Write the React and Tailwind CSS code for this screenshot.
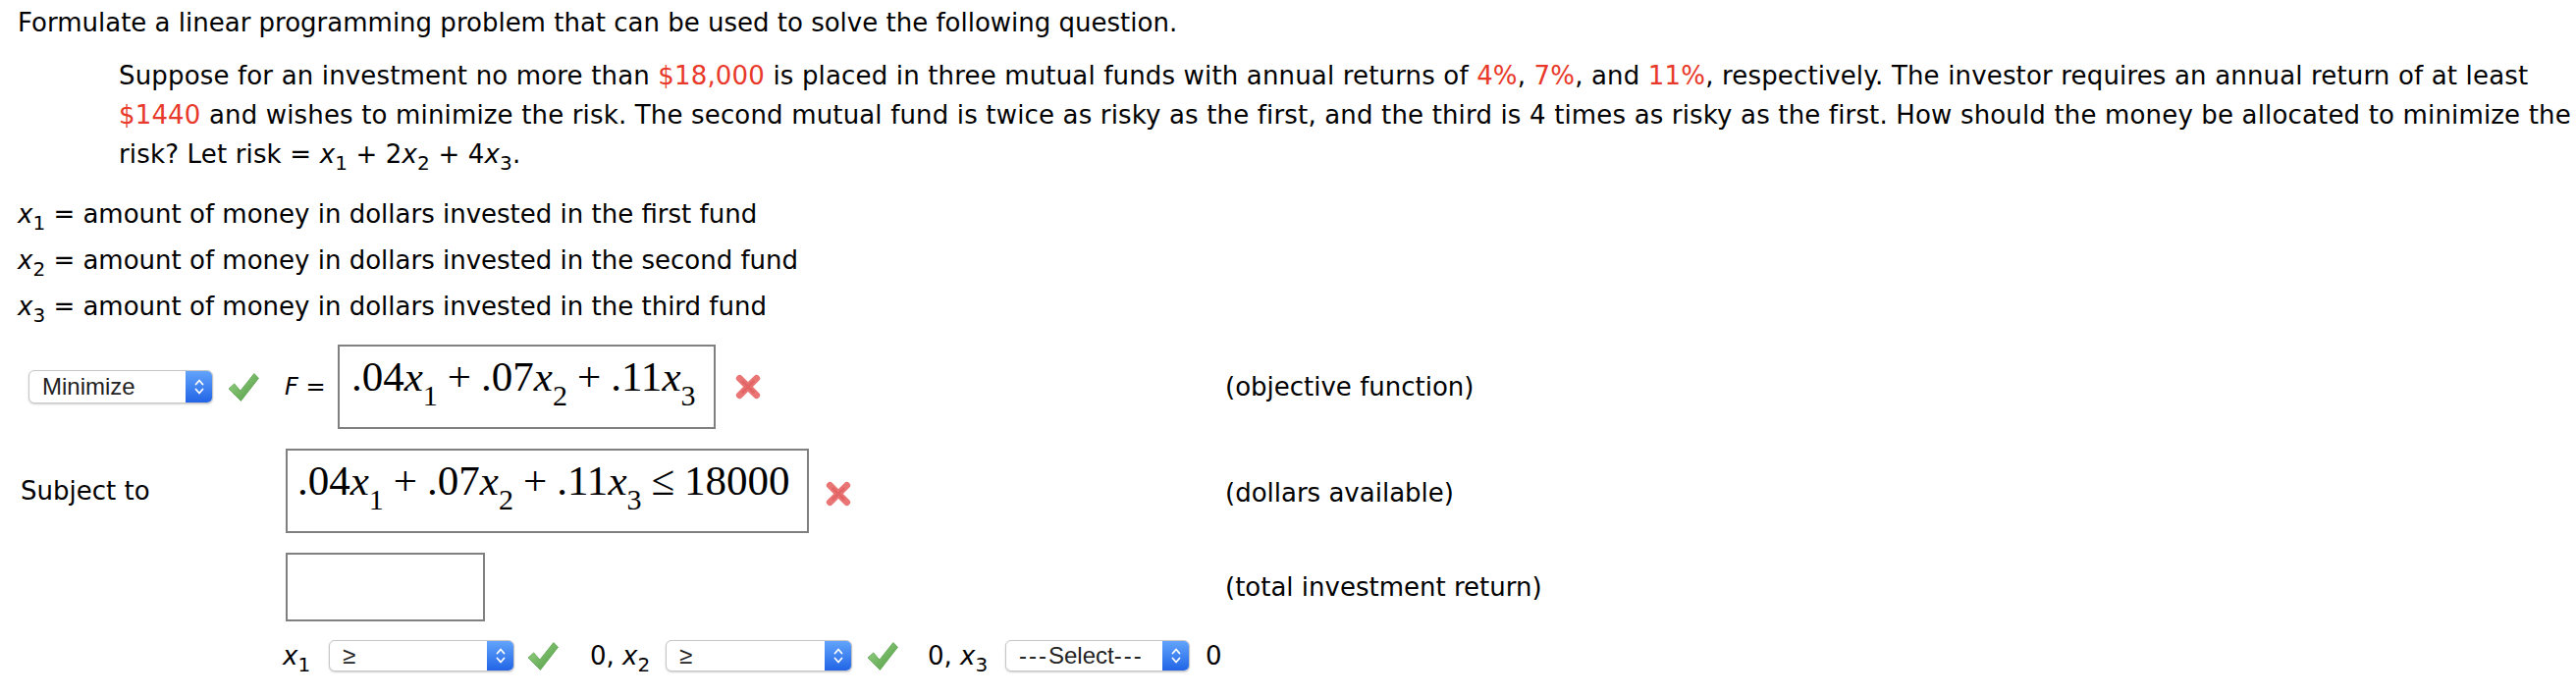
import React from 'react';

const sans = "font-['DejaVu_Sans','Verdana',sans-serif]";
const ui = "font-['Liberation_Sans','Helvetica',sans-serif]";
const serif = "font-['Liberation_Serif','Times_New_Roman',serif]";

// x with subscript, in running text
function V({ n }) {
  return (
    <>
      <span className="italic">x</span>
      <span className="relative top-[7px] text-[20px] leading-none">{n}</span>
    </>
  );
}

// x with subscript, in the math boxes
function MX({ c, n }) {
  return (
    <>
      {c}
      <span className="italic">x</span>
      <span className="relative top-[15px] text-[30px] leading-none">{n}</span>
    </>
  );
}

function Op({ children }) {
  return <span className="mx-[10px]">{children}</span>;
}

function Check() {
  return (
    <svg width="34" height="31" viewBox="0 0 32 30" className="shrink-0">
      <defs>
        <linearGradient id="ck" x1="0" y1="0" x2="1" y2="1">
          <stop offset="0" stopColor="#9ad486" />
          <stop offset="1" stopColor="#4f9a44" />
        </linearGradient>
      </defs>
      <path d="M1.5 16.5 L7 11.5 L13 18.5 L26.5 1.5 L31 6 L13.5 28.5 Z" fill="url(#ck)" stroke="#5fa552" strokeWidth="0.8" strokeLinejoin="round" />
    </svg>
  );
}

function Cross() {
  return (
    <svg width="28" height="28" viewBox="0 0 26 26" className="shrink-0">
      <g stroke="#e97575" strokeWidth="6.5" strokeLinecap="round">
        <line x1="5" y1="5" x2="21" y2="21" />
        <line x1="21" y1="5" x2="5" y2="21" />
      </g>
      <g stroke="#dc5454" strokeWidth="2.5" strokeLinecap="round" opacity="0.5">
        <line x1="8" y1="8" x2="18" y2="18" />
        <line x1="18" y1="8" x2="8" y2="18" />
      </g>
    </svg>
  );
}

function Select({ children, w, h }) {
  return (
    <div className={`flex shrink-0 items-stretch rounded-[6px] border border-[#c6c6c6] bg-white shadow-[0_1px_2px_rgba(0,0,0,0.18)] ${w} ${h}`}>
      <div className={`flex flex-1 items-center pl-[13px] text-[24px] text-[#222] ${ui}`}>{children}</div>
      <div className="flex w-[27px] items-center justify-center rounded-r-[5px] bg-linear-to-b from-[#62a3fb] to-[#2264e6]">
        <svg width="12" height="22" viewBox="0 0 12 22">
          <g fill="none" stroke="#fff" strokeWidth="1.8" strokeLinecap="round" strokeLinejoin="round">
            <path d="M2.5 8.5 L6 4.5 L9.5 8.5" />
            <path d="M2.5 13.5 L6 17.5 L9.5 13.5" />
          </g>
        </svg>
      </div>
    </div>
  );
}

export default function App() {
  return (
    <div className={`h-[710px] w-[2624px] overflow-hidden bg-white pl-[18px] pt-[8px] text-[26px] text-black ${sans}`}>
      <div className="leading-[30px] whitespace-nowrap">
        Formulate a linear programming problem that can be used to solve the following question.
      </div>

      <div className="mt-[19px] ml-[103px] leading-[40px] whitespace-nowrap tracking-[0.16px]">
        Suppose for an investment no more than <span className="text-[#e8392a]">$18,000</span> is placed in three mutual
        funds with annual returns of <span className="text-[#e8392a]">4%</span>, <span className="text-[#e8392a]">7%</span>, and{' '}
        <span className="text-[#e8392a]">11%</span>, respectively. The investor requires an annual return of at least
        <br />
        <span className="text-[#e8392a]">$1440</span> and wishes to minimize the risk. The second mutual fund is twice as risky
        as the first, and the third is 4 times as risky as the first. How should the money be allocated to minimize the
        <br />
        risk? Let risk = <V n="1" /> + 2<V n="2" /> + 4<V n="3" />.
      </div>

      <div className="mt-[18px] leading-[47px] whitespace-nowrap">
        <div><V n="1" /> = amount of money in dollars invested in the first fund</div>
        <div><V n="2" /> = amount of money in dollars invested in the second fund</div>
        <div><V n="3" /> = amount of money in dollars invested in the third fund</div>
      </div>

      {/* objective */}
      <div className="mt-[15px] flex h-[86px] items-center">
        <div className="flex w-[1230px] shrink-0 items-center">
          <div className="ml-[11px]">
            <Select w="w-[188px]" h="h-[34px]">Minimize</Select>
          </div>
          <div className="ml-[14px]"><Check /></div>
          <div className="ml-[25px] w-[42px] text-[24px] whitespace-nowrap">
            <span className="italic">F</span> =
          </div>
          <div className={`ml-[12px] box-border h-[86px] w-[385px] border-2 border-[#808080] pl-[12px] pt-[11px] text-[43px] leading-[40px] whitespace-nowrap ${serif}`}>
            <MX c=".04" n="1" /><Op>+</Op><MX c=".07" n="2" /><Op>+</Op><MX c=".11" n="3" />
          </div>
          <div className="ml-[19px]"><Cross /></div>
        </div>
        <div className="whitespace-nowrap">(objective function)</div>
      </div>

      {/* constraint 1 */}
      <div className="mt-[20px] flex h-[86px] items-center">
        <div className="flex w-[1230px] shrink-0 items-center">
          <div className="w-[273px] shrink-0 pl-[3px]">Subject to</div>
          <div className={`box-border h-[86px] w-[533px] border-2 border-[#808080] pl-[10px] pt-[11px] text-[43px] leading-[40px] whitespace-nowrap ${serif}`}>
            <MX c=".04" n="1" /><Op>+</Op><MX c=".07" n="2" /><Op>+</Op><MX c=".11" n="3" /><Op>≤</Op>18000
          </div>
          <div className="ml-[16px] mt-[6px]"><Cross /></div>
        </div>
        <div className="mt-[4px] whitespace-nowrap">(dollars available)</div>
      </div>

      {/* constraint 2 */}
      <div className="mt-[20px] flex h-[70px] items-center">
        <div className="flex w-[1230px] shrink-0 items-center">
          <div className="w-[273px] shrink-0" />
          <div className="box-border h-[70px] w-[203px] border-2 border-[#808080]" />
        </div>
        <div className="whitespace-nowrap">(total investment return)</div>
      </div>

      {/* non-negativity */}
      <div className="mt-[18px] flex h-[34px] items-center whitespace-nowrap">
        <div className="ml-[270px] w-[47px] shrink-0"><V n="1" /></div>
        <Select w="w-[189px]" h="h-[32px]">≥</Select>
        <div className="ml-[12px]"><Check /></div>
        <div className="ml-[31px] w-[77px] shrink-0">0, <V n="2" /></div>
        <Select w="w-[190px]" h="h-[32px]">≥</Select>
        <div className="ml-[14px]"><Check /></div>
        <div className="ml-[29px] w-[79px] shrink-0">0, <V n="3" /></div>
        <Select w="w-[188px]" h="h-[32px]">
          <span className="tracking-[2px]">---</span>Select<span className="tracking-[2px]">---</span>
        </Select>
        <div className="ml-[16px]">0</div>
      </div>
    </div>
  );
}
